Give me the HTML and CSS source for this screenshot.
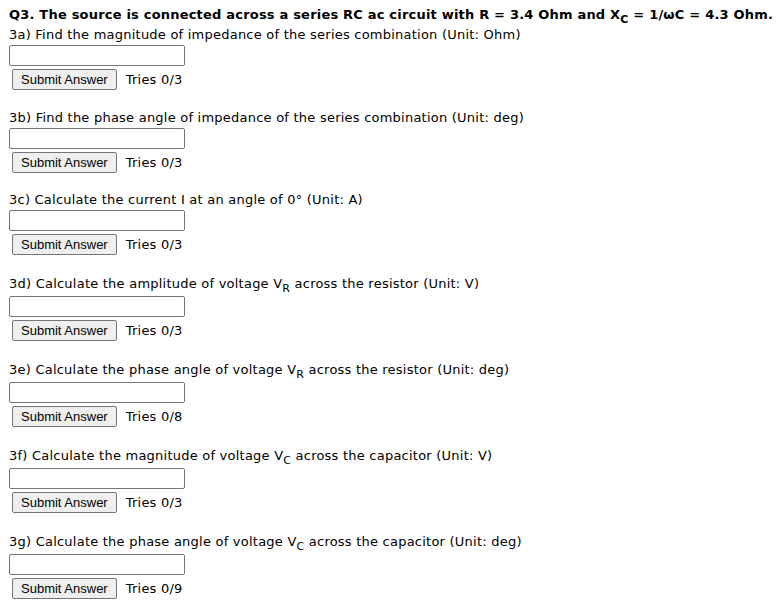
FILE: index.html
```html
<!DOCTYPE html>
<html>
<head>
<meta charset="utf-8">
<link rel="stylesheet" href="styles.css">
</head>
<body>
<div class="page">
  <div class="title">Q3. The source is connected across a series RC ac circuit with R = 3.4 Ohm and X<sub>C</sub> = 1/&omega;C = 4.3 Ohm.</div>

  <div class="part">
    <div class="label">3a) Find the magnitude of impedance of the series combination (Unit: Ohm)</div>
    <input class="answer" type="text">
    <div class="row"><button class="submit">Submit Answer</button><span class="tries">Tries 0/3</span></div>
  </div>

  <div class="part">
    <div class="label">3b) Find the phase angle of impedance of the series combination (Unit: deg)</div>
    <input class="answer" type="text">
    <div class="row"><button class="submit">Submit Answer</button><span class="tries">Tries 0/3</span></div>
  </div>

  <div class="part">
    <div class="label">3c) Calculate the current I at an angle of 0&deg; (Unit: A)</div>
    <input class="answer" type="text">
    <div class="row"><button class="submit">Submit Answer</button><span class="tries">Tries 0/3</span></div>
  </div>

  <div class="part">
    <div class="label sublabel">3d) Calculate the amplitude of voltage V<sub>R</sub> across the resistor (Unit: V)</div>
    <input class="answer" type="text">
    <div class="row"><button class="submit">Submit Answer</button><span class="tries">Tries 0/3</span></div>
  </div>

  <div class="part">
    <div class="label sublabel">3e) Calculate the phase angle of voltage V<sub>R</sub> across the resistor (Unit: deg)</div>
    <input class="answer" type="text">
    <div class="row"><button class="submit">Submit Answer</button><span class="tries">Tries 0/8</span></div>
  </div>

  <div class="part">
    <div class="label sublabel">3f) Calculate the magnitude of voltage V<sub>C</sub> across the capacitor (Unit: V)</div>
    <input class="answer" type="text">
    <div class="row"><button class="submit">Submit Answer</button><span class="tries">Tries 0/3</span></div>
  </div>

  <div class="part">
    <div class="label sublabel">3g) Calculate the phase angle of voltage V<sub>C</sub> across the capacitor (Unit: deg)</div>
    <input class="answer" type="text">
    <div class="row"><button class="submit">Submit Answer</button><span class="tries">Tries 0/9</span></div>
  </div>
</div>
</body>
</html>
```

FILE: styles.css
```css
html, body {
  margin: 0;
  padding: 0;
  background: #ffffff;
}

.page {
  padding: 7px 9px 8px;
  font-family: "DejaVu Sans", Verdana, sans-serif;
  font-size: 13px;
  letter-spacing: 0.23px;
  color: #000;
  display: flex;
  flex-direction: column;
}

.title {
  font-weight: bold;
  line-height: 16px;
  letter-spacing: 0.2px;
  margin-bottom: 4px;
  white-space: nowrap;
}

sub {
  font-size: 11px;
  vertical-align: -4px;
  line-height: 0;
}

.part {
  display: flex;
  flex-direction: column;
  align-items: flex-start;
  margin-bottom: 19.5px;
}

.label {
  line-height: 16px;
  margin-bottom: 2px;
  white-space: nowrap;
}

.sublabel {
  padding-top: 1px;
  padding-bottom: 2.5px;
}

.answer {
  box-sizing: border-box;
  width: 176px;
  height: 21px;
  margin: 0;
  border: 1px solid #767676;
  border-radius: 2px;
  background: #fff;
  padding: 1px 2px;
}

.row {
  display: flex;
  align-items: center;
  margin-top: 3px;
  margin-left: 3px;
}

.submit {
  box-sizing: border-box;
  height: 21px;
  margin: 0;
  padding: 1px 8px;
  font-family: "Liberation Sans", Arial, sans-serif;
  font-size: 13px;
  letter-spacing: 0;
  color: #000;
  background: #efefef;
  border: 1px solid #767676;
  border-radius: 2px;
}

.tries {
  margin-left: 9px;
}
```
